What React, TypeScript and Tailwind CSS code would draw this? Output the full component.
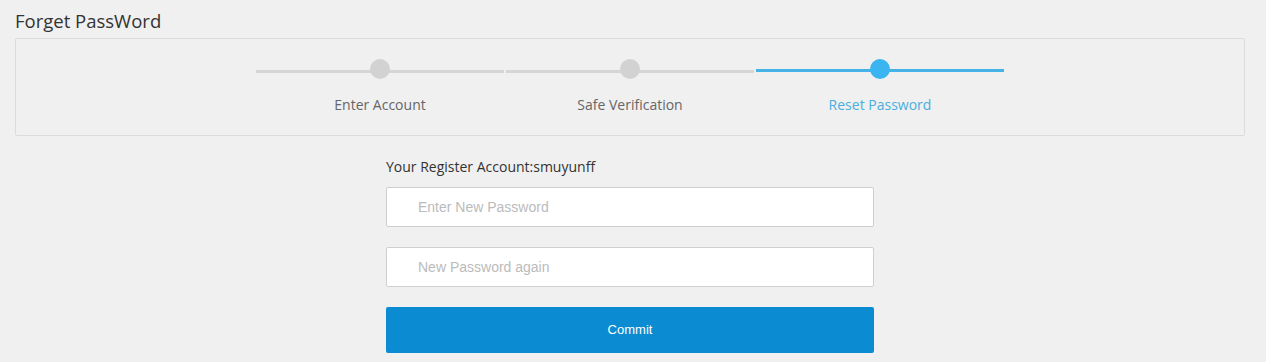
const steps = [
  { label: 'Enter Account', active: false },
  { label: 'Safe Verification', active: false },
  { label: 'Reset Password', active: true },
];

function Step({ label, active }: { label: string; active: boolean }) {
  return (
    <div className="flex w-[250px] flex-col items-center">
      <div className="relative h-[20px] w-full">
        <div
          className={
            active
              ? 'absolute left-[1px] right-[1px] top-[10px] h-[3px] bg-[#45b2e8]'
              : 'absolute left-[1px] right-[1px] top-[11px] h-[3px] bg-[#d5d5d5]'
          }
        />
        <div
          className={
            active
              ? 'absolute left-1/2 top-0 h-[20px] w-[20px] -translate-x-1/2 rounded-full bg-[#3bb4f2]'
              : 'absolute left-1/2 top-0 h-[20px] w-[20px] -translate-x-1/2 rounded-full bg-[#d2d2d2]'
          }
        />
      </div>
      <span className={active ? 'mt-[15px] text-[14px] text-[#4aaedd]' : 'mt-[15px] text-[14px] text-[#666]'}>
        {label}
      </span>
    </div>
  );
}

export default function App() {
  return (
    <div className="min-h-[362px] bg-[#f0f0f0] pl-[15px] pr-[21px] font-['Open_Sans','Noto_Sans',sans-serif]">
      <h1 className="h-[38px] pt-[9px] text-[18.5px] leading-[24px] text-[#333]">Forget PassWord</h1>

      <div className="flex h-[98px] justify-center rounded-[2px] border border-[#dcdcdc] pt-[20px]">
        {steps.map((s) => (
          <Step key={s.label} label={s.label} active={s.active} />
        ))}
      </div>

      <div className="mx-auto mt-[20px] flex w-[488px] flex-col">
        <p className="text-[14px] leading-[22px] text-[#333]">Your Register Account:smuyunff</p>

        <input
          type="password"
          placeholder="Enter New Password"
          className="mt-[9px] h-[40px] rounded-[2px] border border-[#cfcfcf] bg-white px-[31px] font-['Liberation_Sans',Arial,sans-serif] text-[14px] text-[#333] outline-none placeholder:text-[#bbb]"
        />
        <input
          type="password"
          placeholder="New Password again"
          className="mt-[20px] h-[40px] rounded-[2px] border border-[#cfcfcf] bg-white px-[31px] font-['Liberation_Sans',Arial,sans-serif] text-[14px] text-[#333] outline-none placeholder:text-[#bbb]"
        />
        <button className="mt-[20px] h-[46px] rounded-[2px] bg-[#0b8bd2] font-['Liberation_Sans',Arial,sans-serif] text-[13px] text-white">
          Commit
        </button>
      </div>
    </div>
  );
}
